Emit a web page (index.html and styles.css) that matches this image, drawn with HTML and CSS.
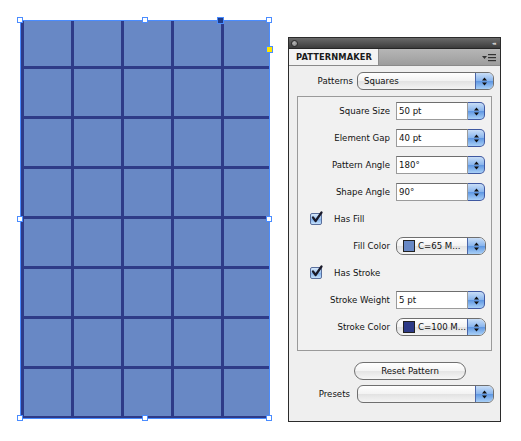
FILE: index.html
```html
<!DOCTYPE html>
<html>
<head>
<meta charset="utf-8">
<link rel="stylesheet" href="styles.css">
</head>
<body>
<div class="stage">
  <div class="art">
    <svg class="art-svg" width="250" height="399" viewBox="0 0 250 399">
      <rect x="0" y="0" width="250" height="399" fill="#6888c5"/>
      <g fill="#2e3b88">
        <rect x="1" y="0" width="3" height="399"/>
        <rect x="51" y="0" width="3" height="399"/>
        <rect x="101" y="0" width="3" height="399"/>
        <rect x="151" y="0" width="3" height="399"/>
        <rect x="201" y="0" width="3" height="399"/>
        <rect x="0" y="46" width="250" height="3"/>
        <rect x="0" y="96" width="250" height="3"/>
        <rect x="0" y="146" width="250" height="3"/>
        <rect x="0" y="196" width="250" height="3"/>
        <rect x="0" y="246" width="250" height="3"/>
        <rect x="0" y="296" width="250" height="3"/>
        <rect x="0" y="346" width="250" height="3"/>
        <rect x="0" y="396" width="250" height="3"/>
      </g>
      <rect x="0.5" y="0.5" width="249" height="398" fill="none" stroke="#4a8cff" stroke-width="1"/>
    </svg>
    <span class="handle h-tl"></span>
    <span class="handle h-tm"></span>
    <span class="handle h-tr"></span>
    <span class="handle h-ml"></span>
    <span class="handle h-mr"></span>
    <span class="handle h-bl"></span>
    <span class="handle h-bm"></span>
    <span class="handle h-br"></span>
    <span class="handle-dark"></span>
    <span class="handle-yellow"></span>
  </div>

  <div class="panel">
    <div class="titlebar">
      <span class="close-dot"></span>
      <span class="collapse">&#9666;&#9666;</span>
    </div>
    <div class="tabrow">
      <div class="tab">PATTERNMAKER</div>
      <div class="menu-icon">
        <svg width="14" height="9" viewBox="0 0 14 9">
          <path d="M0 3 H5 L2.5 6 Z" fill="#333"/>
          <rect x="6" y="1" width="8" height="1.2" fill="#333"/>
          <rect x="6" y="4" width="8" height="1.2" fill="#333"/>
          <rect x="6" y="7" width="8" height="1.2" fill="#333"/>
        </svg>
      </div>
    </div>
    <div class="body">
      <div class="toprow">
        <span class="lbl">Patterns</span>
        <div class="popup wide">
          <span class="popup-text">Squares</span>
          <span class="stepper">
            <svg width="7" height="11" viewBox="0 0 7 11"><path d="M3.5 1.5 L6 4.5 H1Z M3.5 9.5 L6 6.5 H1Z" fill="#111"/></svg>
          </span>
        </div>
      </div>

      <div class="group">
        <div class="row">
          <span class="lbl-r">Square Size</span>
          <div class="field"><span class="field-text">50 pt</span><span class="stepper sq"><svg width="7" height="11" viewBox="0 0 7 11"><path d="M3.5 1.5 L6 4.5 H1Z M3.5 9.5 L6 6.5 H1Z" fill="#111"/></svg></span></div>
        </div>
        <div class="row">
          <span class="lbl-r">Element Gap</span>
          <div class="field"><span class="field-text">40 pt</span><span class="stepper sq"><svg width="7" height="11" viewBox="0 0 7 11"><path d="M3.5 1.5 L6 4.5 H1Z M3.5 9.5 L6 6.5 H1Z" fill="#111"/></svg></span></div>
        </div>
        <div class="row">
          <span class="lbl-r">Pattern Angle</span>
          <div class="field"><span class="field-text">180°</span><span class="stepper sq"><svg width="7" height="11" viewBox="0 0 7 11"><path d="M3.5 1.5 L6 4.5 H1Z M3.5 9.5 L6 6.5 H1Z" fill="#111"/></svg></span></div>
        </div>
        <div class="row">
          <span class="lbl-r">Shape Angle</span>
          <div class="field"><span class="field-text">90°</span><span class="stepper sq"><svg width="7" height="11" viewBox="0 0 7 11"><path d="M3.5 1.5 L6 4.5 H1Z M3.5 9.5 L6 6.5 H1Z" fill="#111"/></svg></span></div>
        </div>
        <div class="row check-row">
          <span class="checkbox"><svg width="14" height="14" viewBox="0 0 14 14"><path d="M3 6.5 L5.6 10 L11.5 1.5" fill="none" stroke="#1a1a2a" stroke-width="2.2" stroke-linecap="round" stroke-linejoin="round"/></svg></span>
          <span class="check-lbl">Has Fill</span>
        </div>
        <div class="row">
          <span class="lbl-r">Fill Color</span>
          <div class="popup color">
            <span class="swatch fill"></span>
            <span class="popup-text">C=65 M...</span>
            <span class="stepper"><svg width="7" height="11" viewBox="0 0 7 11"><path d="M3.5 1.5 L6 4.5 H1Z M3.5 9.5 L6 6.5 H1Z" fill="#111"/></svg></span>
          </div>
        </div>
        <div class="row check-row">
          <span class="checkbox"><svg width="14" height="14" viewBox="0 0 14 14"><path d="M3 6.5 L5.6 10 L11.5 1.5" fill="none" stroke="#1a1a2a" stroke-width="2.2" stroke-linecap="round" stroke-linejoin="round"/></svg></span>
          <span class="check-lbl">Has Stroke</span>
        </div>
        <div class="row">
          <span class="lbl-r">Stroke Weight</span>
          <div class="field"><span class="field-text">5 pt</span><span class="stepper sq"><svg width="7" height="11" viewBox="0 0 7 11"><path d="M3.5 1.5 L6 4.5 H1Z M3.5 9.5 L6 6.5 H1Z" fill="#111"/></svg></span></div>
        </div>
        <div class="row">
          <span class="lbl-r">Stroke Color</span>
          <div class="popup color">
            <span class="swatch stroke"></span>
            <span class="popup-text">C=100 M...</span>
            <span class="stepper"><svg width="7" height="11" viewBox="0 0 7 11"><path d="M3.5 1.5 L6 4.5 H1Z M3.5 9.5 L6 6.5 H1Z" fill="#111"/></svg></span>
          </div>
        </div>
      </div>

      <div class="btnrow">
        <div class="button">Reset Pattern</div>
      </div>

      <div class="toprow presets">
        <span class="lbl">Presets</span>
        <div class="popup wide">
          <span class="popup-text"></span>
          <span class="stepper">
            <svg width="7" height="11" viewBox="0 0 7 11"><path d="M3.5 1.5 L6 4.5 H1Z M3.5 9.5 L6 6.5 H1Z" fill="#111"/></svg>
          </span>
        </div>
      </div>
    </div>
  </div>
</div>
</body>
</html>
```

FILE: styles.css
```css
* { box-sizing: border-box; }

html, body {
  margin: 0;
  padding: 0;
  background: #ffffff;
}

body {
  width: 521px;
  height: 441px;
  overflow: hidden;
  font-family: "DejaVu Sans", "Lucida Grande", sans-serif;
  font-size: 8.6px;
  color: #111;
}

.stage {
  display: flex;
  align-items: flex-start;
  padding: 20px 0 0 20px;
}

/* ---------- artwork ---------- */
.art {
  position: relative;
  width: 250px;
  height: 399px;
  flex: none;
}

.art-svg { display: block; }

.handle {
  position: absolute;
  width: 6px;
  height: 6px;
  background: #ffffff;
  border: 1px solid #4a8cff;
}
.h-tl { left: -3px; top: -3px; }
.h-tm { left: 122px; top: -3px; }
.h-tr { left: 246px; top: -3px; }
.h-ml { left: -3px; top: 196px; }
.h-mr { left: 246px; top: 196px; }
.h-bl { left: -3px; top: 395px; }
.h-bm { left: 122px; top: 395px; }
.h-br { left: 246px; top: 395px; }

.handle-dark {
  position: absolute;
  left: 197px;
  top: -3px;
  width: 7px;
  height: 7px;
  background: #1f3c8a;
  border: 1px solid #4a8cff;
}

.handle-yellow {
  position: absolute;
  left: 246px;
  top: 26px;
  width: 7px;
  height: 7px;
  background: #ffe600;
  border: 1px solid #4a8cff;
}

/* ---------- panel ---------- */
.panel {
  flex: none;
  margin-left: 18px;
  margin-top: 17px;
  width: 213px;
  height: 385px;
  border: 1px solid #2b2b2b;
  background: #efefef;
  display: flex;
  flex-direction: column;
}

.titlebar {
  height: 10px;
  background: linear-gradient(#6a6a6a, #3c3c3c);
  display: flex;
  align-items: center;
  justify-content: space-between;
  padding: 0 5px 0 2px;
}

.close-dot {
  width: 7px;
  height: 7px;
  border-radius: 50%;
  background: radial-gradient(circle at 40% 35%, #b5b5b5, #7a7a7a);
  border: 1px solid #2a2a2a;
}

.collapse {
  color: #cfcfcf;
  font-size: 5px;
  letter-spacing: -1px;
  line-height: 1;
}

.tabrow {
  height: 18px;
  display: flex;
  align-items: stretch;
  background: linear-gradient(#b6b6b6, #9d9d9d);
  border-top: 1px solid #262626;
  border-bottom: 1px solid #8a8a8a;
}

.tab {
  width: 90px;
  background: #f3f3f3;
  border-right: 1px solid #8e8e8e;
  font-weight: bold;
  font-size: 8.3px;
  color: #1a1a1a;
  display: flex;
  align-items: center;
  padding-left: 7px;
  letter-spacing: 0.1px;
}

.menu-icon {
  margin-left: auto;
  display: flex;
  align-items: center;
  padding-right: 4px;
}
.menu-icon svg { display: block; }

.body {
  display: flex;
  flex-direction: column;
  padding: 6px 0 0 0;
}

.toprow {
  display: flex;
  align-items: center;
  justify-content: flex-end;
  height: 18px;
  padding-right: 6px;
}

.lbl {
  margin-right: 4px;
}

.popup {
  height: 18px;
  border: 1px solid #6f6f6f;
  border-radius: 6px;
  background: linear-gradient(#ffffff, #f2f2f2 50%, #e2e2e2 51%, #f4f4f4);
  display: flex;
  align-items: center;
  overflow: hidden;
}

.popup.wide { width: 137px; }

.popup-text {
  flex: 1;
  padding-left: 6px;
  white-space: nowrap;
}

.stepper {
  flex: none;
  width: 18px;
  height: 100%;
  background: linear-gradient(#c9def7, #8ab6ee 48%, #5f97e2 52%, #a9d0f7);
  border-left: 1px solid #4b66a8;
  display: flex;
  align-items: center;
  justify-content: center;
}
.stepper svg { display: block; }

.group {
  margin: 6px 8px 0 8px;
  border: 1px solid #9a9a9a;
  background: #f1f1f1;
  padding: 5px 0 14px 0;
  display: flex;
  flex-direction: column;
  gap: 9px;
}

.row {
  height: 18px;
  display: grid;
  grid-template-columns: 92px 90px;
  column-gap: 6px;
  align-items: center;
}

.lbl-r {
  text-align: right;
  white-space: nowrap;
}

.field {
  height: 18px;
  width: 89px;
  display: flex;
}

.field-text {
  flex: 1;
  background: #ffffff;
  border: 1px solid #9b9b9b;
  border-top-color: #6e6e6e;
  padding-left: 2px;
  display: flex;
  align-items: center;
}

.stepper.sq {
  width: 17px;
  border: 1px solid #3f58a0;
  border-left: none;
  border-radius: 0 5px 5px 0;
}

.check-row {
  display: flex;
  align-items: center;
  padding-left: 12px;
}

.checkbox {
  width: 12px;
  height: 12px;
  border: 1px solid #5a6f9c;
  border-radius: 2px;
  background: linear-gradient(#d6e8fb, #9cc3f0 50%, #7eb0ec 51%, #c5e0fb);
  position: relative;
  flex: none;
}
.checkbox svg {
  position: absolute;
  left: -1px;
  top: -3px;
}

.check-lbl {
  margin-left: 6px;
}

.popup.color {
  width: 90px;
  border-radius: 7px;
}

.swatch {
  flex: none;
  width: 12px;
  height: 12px;
  margin-left: 6px;
  border: 1px solid #222;
}
.swatch.fill { background: #6888c5; }
.swatch.stroke { background: #2e3b88; }

.popup.color .popup-text { padding-left: 3px; }

.btnrow {
  margin-top: 11px;
  padding-left: 65px;
  display: flex;
}

.button {
  width: 112px;
  height: 18px;
  border: 1px solid #707070;
  border-radius: 9px;
  background: linear-gradient(#ffffff, #f4f4f4 50%, #e4e4e4 51%, #f6f6f6);
  display: flex;
  align-items: center;
  justify-content: center;
}

.presets {
  margin-top: 5px;
}
.presets .lbl { margin-right: 7px; }
```
